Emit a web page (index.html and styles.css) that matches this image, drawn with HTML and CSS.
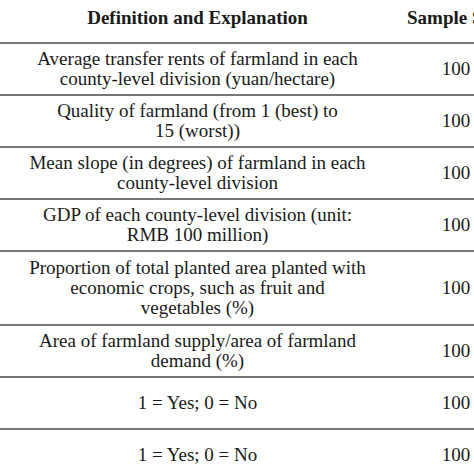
FILE: index.html
```html
<!DOCTYPE html>
<html>
<head>
<meta charset="utf-8">
<link rel="stylesheet" href="styles.css">
</head>
<body>
<div class="table">
  <div class="row head">
    <div class="def">Definition and Explanation</div>
    <div class="num">Sample Size</div>
  </div>
  <div class="row">
    <div class="def">Average transfer rents of farmland in each<br>county-level division (yuan/hectare)</div>
    <div class="num">100</div>
  </div>
  <div class="row">
    <div class="def">Quality of farmland (from 1 (best) to<br>15 (worst))</div>
    <div class="num">100</div>
  </div>
  <div class="row">
    <div class="def">Mean slope (in degrees) of farmland in each<br>county-level division</div>
    <div class="num">100</div>
  </div>
  <div class="row">
    <div class="def">GDP of each county-level division (unit:<br>RMB 100 million)</div>
    <div class="num">100</div>
  </div>
  <div class="row triple">
    <div class="def">Proportion of total planted area planted with<br>economic crops, such as fruit and<br>vegetables (%)</div>
    <div class="num">100</div>
  </div>
  <div class="row">
    <div class="def">Area of farmland supply/area of farmland<br>demand (%)</div>
    <div class="num">100</div>
  </div>
  <div class="row single">
    <div class="def">1 = Yes; 0 = No</div>
    <div class="num">100</div>
  </div>
  <div class="row single">
    <div class="def">1 = Yes; 0 = No</div>
    <div class="num">100</div>
  </div>
</div>
</body>
</html>
```
FILE: styles.css
```css
html, body {
  margin: 0;
  padding: 0;
  background: #ffffff;
  overflow: hidden;
}
body {
  width: 474px;
  height: 474px;
}
.table {
  width: 540px;
  font-family: "Liberation Serif", "Times New Roman", serif;
  font-size: 19px;
  line-height: 20px;
  color: #1a1a1a;
}
.row {
  display: grid;
  grid-template-columns: 395px 122px;
  align-items: center;
  border-bottom: 2px solid #777777;
  padding: 5px 0 5px;
}
.row.head {
  height: 42px;
  padding: 0;
  font-weight: bold;
}
.row.head .def, .row.head .num {
  padding-bottom: 6px;
}
.row.head .num {
  text-align: left;
  padding-left: 12px;
}
.row.triple {
  padding: 6px 0 6px;
}
.row.single {
  height: 40px;
}
.def {
  text-align: center;
}
.num {
  text-align: center;
}
```
